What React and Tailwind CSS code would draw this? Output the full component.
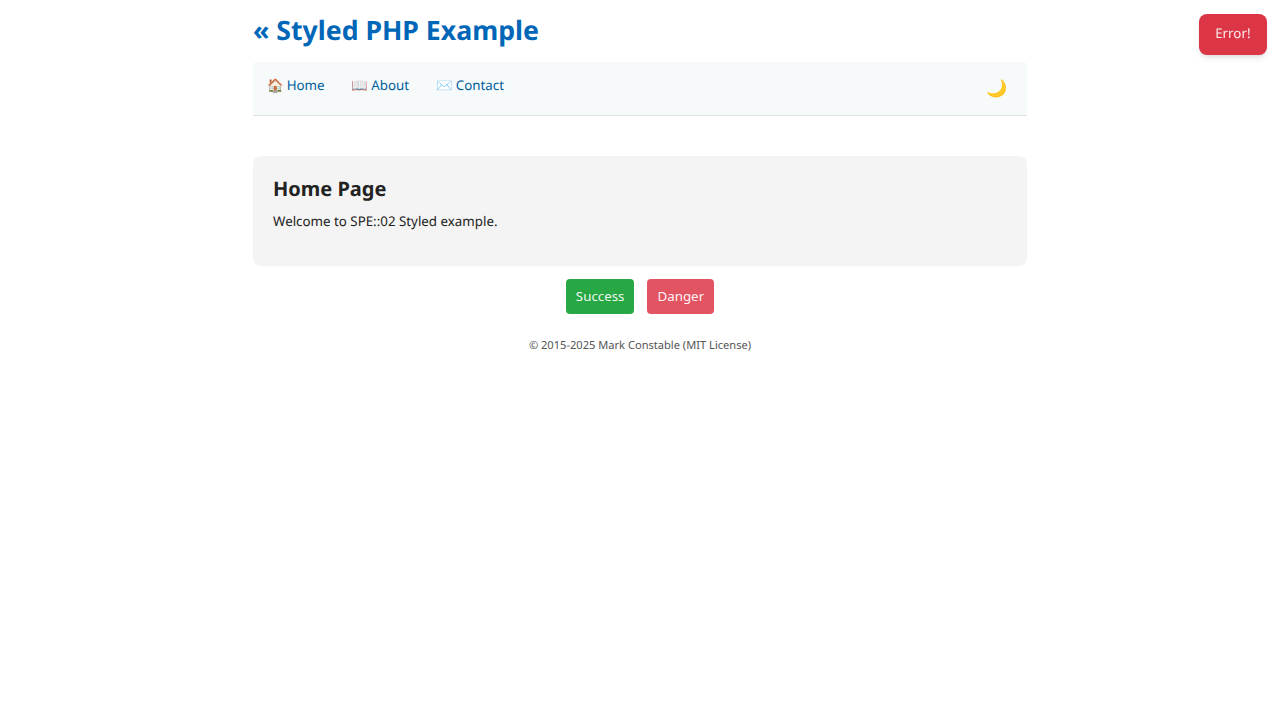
const font = "font-['Noto_Sans',sans-serif] [text-rendering:geometricPrecision]";

export default function App() {
  return (
    <div className={`${font} min-h-screen bg-white relative text-[#222222]`}>
      <div className="fixed top-[13.5px] right-[13px] bg-[#dc3545] text-white/90 text-[13.33px] leading-[20px] px-[16.5px] pt-[9.5px] pb-[11.5px] rounded-lg shadow-md">
        Error!
      </div>
      <div className="w-[774px] mx-auto">
        <h1 className="text-[26.67px] leading-[38px] font-bold text-[#0066b8] pt-[11px] mb-[13px]">
          « Styled PHP Example
        </h1>
        <nav className="h-[54px] bg-[#f7fafa] border-b border-[#d8e6e6] rounded-t flex justify-between pl-[14px] pr-[19.5px]">
          <div className="flex gap-[27px] pt-[13px] text-[13.33px] leading-[20px] text-[#005f9e] [word-spacing:-0.4px]">
            <a>🏠 Home</a>
            <a>📖 About</a>
            <a>✉️ Contact</a>
          </div>
          <span className="text-[17px] leading-[26px] pt-[13px]">🌙</span>
        </nav>
        <main className="mt-10 bg-[#f4f4f4] rounded-lg h-[110px] px-5 pt-[19px]">
          <h2 className="text-[20px] leading-[27px] font-bold">Home Page</h2>
          <p className="text-[13.33px] leading-[20px] mt-[9px]">Welcome to SPE::02 Styled example.</p>
        </main>
        <div className="flex justify-center gap-[13px] mt-[13px]">
          <button className="bg-[#28a745] text-white/95 text-[13.33px] leading-[20px] px-[10px] pb-[2px] h-[35px] rounded">Success</button>
          <button className="bg-[#e35462] text-white/95 text-[13.33px] leading-[20px] px-[10px] pb-[2px] h-[35px] rounded">Danger</button>
        </div>
        <footer className="text-center text-[11.1px] leading-[16px] text-[#555] mt-[23.5px]">
          © 2015-2025 Mark Constable (MIT License)
        </footer>
      </div>
    </div>
  );
}
